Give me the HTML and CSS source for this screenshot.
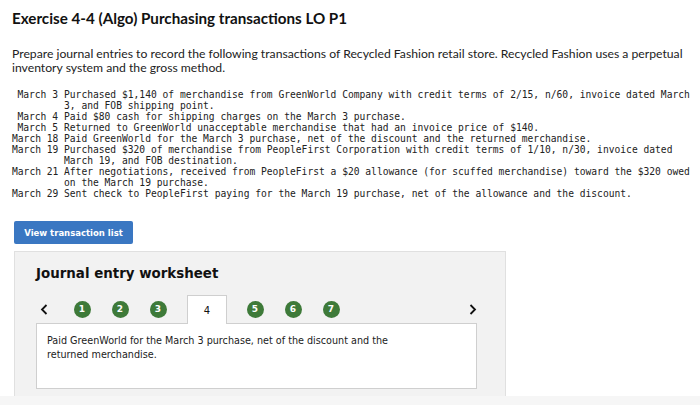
FILE: index.html
```html
<!DOCTYPE html>
<html lang="en">

<head>
    <meta charset="UTF-8">
    <title>Exercise 4-4 (Algo) Purchasing transactions LO P1</title>
    <link rel="stylesheet" href="styles.css">
</head>

<body>
    <div class="page">
        <h1 class="title">Exercise 4-4 (Algo) Purchasing transactions LO P1</h1>

        <p class="intro">Prepare journal entries to record the following transactions of Recycled Fashion retail store. Recycled Fashion uses a perpetual<br>inventory system and the gross method.</p>

        <div class="trans">
            <div class="date">March 3</div>
            <div class="text">Purchased $1,140 of merchandise from GreenWorld Company with credit terms of 2/15, n/60, invoice dated March<br>3, and FOB shipping point.</div>
            <div class="date">March 4</div>
            <div class="text">Paid $80 cash for shipping charges on the March 3 purchase.</div>
            <div class="date">March 5</div>
            <div class="text">Returned to GreenWorld unacceptable merchandise that had an invoice price of $140.</div>
            <div class="date">March 18</div>
            <div class="text">Paid GreenWorld for the March 3 purchase, net of the discount and the returned merchandise.</div>
            <div class="date">March 19</div>
            <div class="text">Purchased $320 of merchandise from PeopleFirst Corporation with credit terms of 1/10, n/30, invoice dated<br>March 19, and FOB destination.</div>
            <div class="date">March 21</div>
            <div class="text">After negotiations, received from PeopleFirst a $20 allowance (for scuffed merchandise) toward the $320 owed<br>on the March 19 purchase.</div>
            <div class="date">March 29</div>
            <div class="text">Sent check to PeopleFirst paying for the March 19 purchase, net of the allowance and the discount.</div>
        </div>

        <button class="btn">View transaction list</button>

        <div class="worksheet">
            <h2 class="ws-title">Journal entry worksheet</h2>
            <div class="tabs">
                <span class="arrow">
                    <svg width="8" height="11" viewBox="0 0 8 11"><path d="M6.5 1 L2 5.5 L6.5 10" fill="none" stroke="#111" stroke-width="1.8"/></svg>
                </span>
                <span class="step"><i>1</i></span>
                <span class="step"><i>2</i></span>
                <span class="step"><i>3</i></span>
                <span class="step current">4</span>
                <span class="step"><i>5</i></span>
                <span class="step"><i>6</i></span>
                <span class="step"><i>7</i></span>
                <span class="arrow next">
                    <svg width="8" height="11" viewBox="0 0 8 11"><path d="M1.5 1 L6 5.5 L1.5 10" fill="none" stroke="#111" stroke-width="1.8"/></svg>
                </span>
            </div>
            <div class="entry">Paid GreenWorld for the March 3 purchase, net of the discount and the<br>returned merchandise.</div>
        </div>
    </div>
    <div class="footer"></div>
</body>

</html>
```

FILE: styles.css
```css
html,
body {
    margin: 0;
    padding: 0;
    background: #fff;
    height: 405px;
    overflow: hidden;
}

.page {
    padding: 9px 12px 0;
    color: #1a1a1a;
    font-family: Lato, "Open Sans", sans-serif;
}

.title {
    margin: 0;
    font-size: 15.2px;
    font-weight: 700;
    line-height: 18px;
    color: #111;
}

.intro {
    margin: 20px 0 0;
    font-size: 12.2px;
    line-height: 14px;
    color: #222;
    white-space: nowrap;
}

.trans {
    display: grid;
    grid-template-columns: 46px 1fr;
    column-gap: 6px;
    margin-top: 14px;
    font-family: "DejaVu Sans Mono", monospace;
    font-size: 9.65px;
    line-height: 11px;
    color: #222;
    white-space: nowrap;
}

.trans .date {
    text-align: right;
}

.btn {
    display: block;
    margin: 22px 0 0 2px;
    width: 119px;
    height: 23px;
    padding: 0;
    border: 0;
    border-radius: 2px;
    background: #3a77c2;
    color: #fff;
    font-family: "DejaVu Sans", Verdana, sans-serif;
    font-size: 8.5px;
    font-weight: 700;
}

.worksheet {
    margin: 7px 0 0 2px;
    width: 469px;
    height: 160px;
    padding: 0 0 0 21px;
    background: #f2f2f2;
    border: 1px solid #e0e0e0;
    font-family: "DejaVu Sans", Verdana, sans-serif;
}

.ws-title {
    margin: 14px 0 0;
    font-size: 13.4px;
    line-height: 16px;
    font-weight: 700;
    color: #111;
}

.tabs {
    display: flex;
    align-items: flex-end;
    height: 29px;
    margin-top: 12px;
    width: 441px;
}

.step {
    display: flex;
    align-items: center;
    justify-content: center;
    width: 38px;
    height: 28px;
}

.step i {
    display: flex;
    align-items: center;
    justify-content: center;
    width: 17px;
    height: 17px;
    border-radius: 50%;
    background: #3e7a39;
    color: #fff;
    font-style: normal;
    font-size: 9px;
    font-weight: 700;
}

.step.current {
    margin: 0 9px -1px 10px;
    background: #fff;
    border: 1px solid #cfcfcf;
    border-bottom: 0;
    font-size: 10px;
    color: #111;
    position: relative;
    z-index: 1;
}

.arrow {
    width: 23px;
    height: 28px;
    display: flex;
    align-items: center;
    padding-left: 4px;
}

.arrow.next {
    margin-left: auto;
    justify-content: flex-end;
    width: 20px;
    padding: 0;
}

.entry {
    width: 419px;
    height: 48px;
    padding: 10px 10px 6px;
    background: #fff;
    border: 1px solid #cfcfcf;
    font-size: 9.65px;
    line-height: 14px;
    color: #222;
}

.footer {
    position: absolute;
    left: 0;
    right: 0;
    top: 396px;
    height: 9px;
    background: #f6f6f6;
}
```
